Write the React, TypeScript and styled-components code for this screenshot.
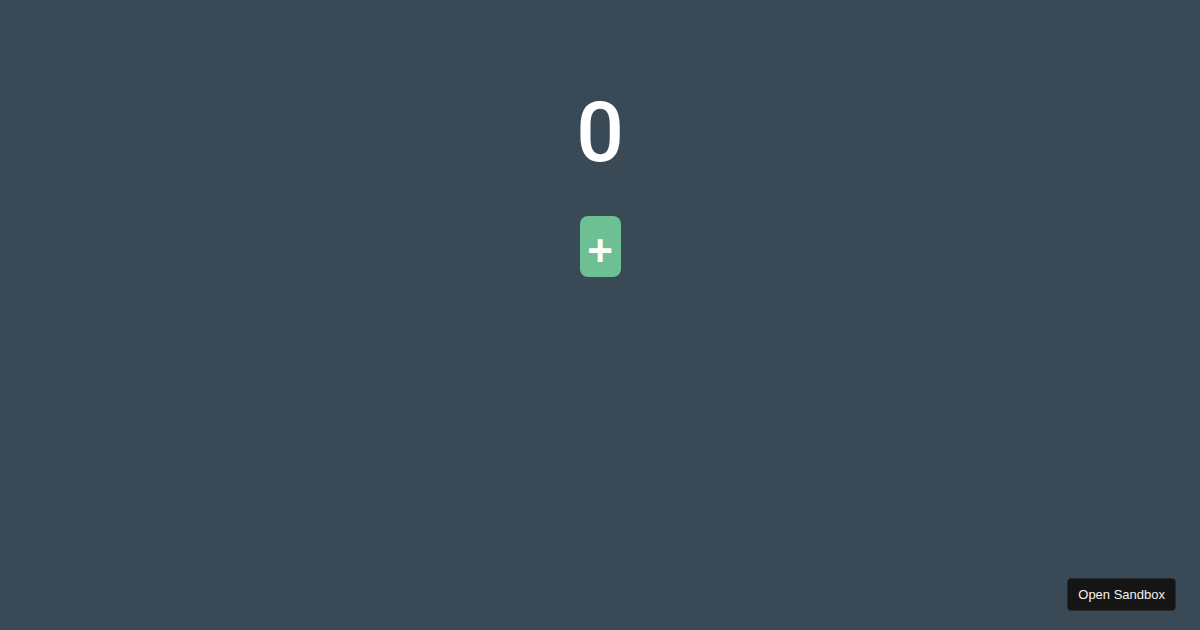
import styled, { createGlobalStyle } from 'styled-components'
import { useState } from 'react'

const GlobalStyle = createGlobalStyle`
  html, body {
    margin: 0;
    height: 100%;
    background: #394a56;
    font-family: Roboto, 'Liberation Sans', sans-serif;
  }
`

const App = () => {
  const [count, setCount] = useState(0)

  return (
    <>
      <GlobalStyle />
      <Page>
        <Count>{count}</Count>
        <AddButton onClick={() => setCount(count + 1)}>+</AddButton>
      </Page>
      <SandboxButton>Open Sandbox</SandboxButton>
    </>
  )
}

export default App

const Page = styled.main`
  display: flex;
  flex-direction: column;
  align-items: center;
  padding-top: 83px;
`

const Count = styled.div`
  color: #ffffff;
  font-family: Roboto, 'Liberation Sans', sans-serif;
  font-size: 84px;
  font-weight: 500;
  line-height: 100px;
`

const AddButton = styled.button`
  margin-top: 33px;
  width: 41px;
  height: 61px;
  border: none;
  border-radius: 8px;
  background: #6cc093;
  color: #ffffff;
  font-family: 'Liberation Sans', sans-serif;
  font-size: 44px;
  font-weight: 700;
  line-height: 1;
  padding: 9px 0 0;
  cursor: pointer;
`

const SandboxButton = styled.button`
  position: fixed;
  right: 24px;
  bottom: 19px;
  height: 33px;
  padding: 0 10px;
  background: #151515;
  border: 1px solid #2a2a2a;
  border-radius: 4px;
  color: #f2f2f2;
  font-family: 'Liberation Sans', Arial, sans-serif;
  font-size: 13px;
  cursor: pointer;
`
